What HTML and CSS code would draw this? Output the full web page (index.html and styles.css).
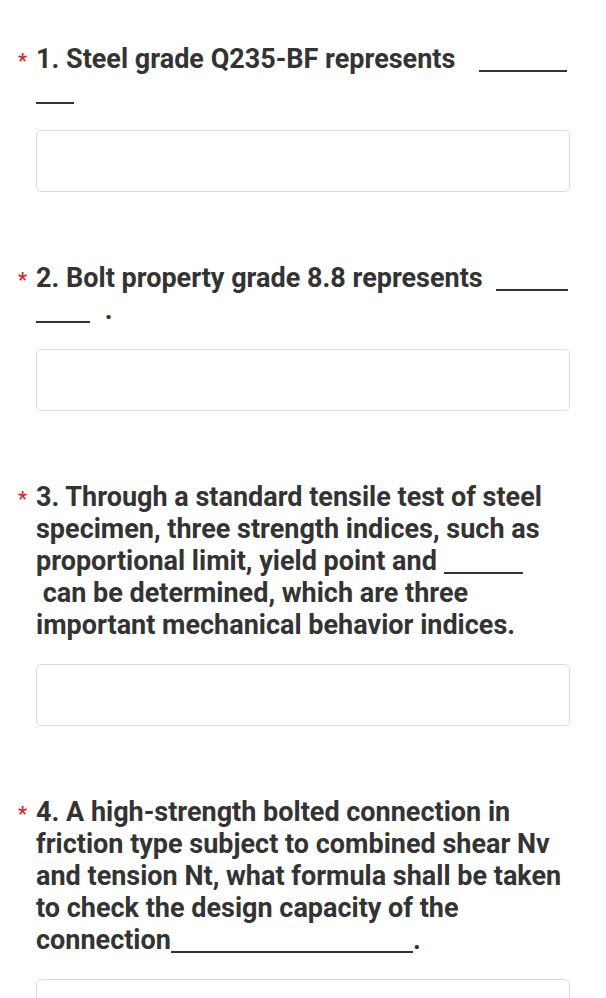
FILE: index.html
```html
<!DOCTYPE html>
<html lang="en">
<head>
<meta charset="utf-8">
<title>Quiz</title>
<link rel="stylesheet" href="styles.css">
</head>
<body>
<main class="form">
  <section class="question">
    <div class="title">
      <span class="req">*</span>
      <p class="text">1. Steel grade Q235-BF represents <span class="blank b1a"></span> <span class="blank b1b"></span></p>
    </div>
    <div class="answer"></div>
  </section>
  <section class="question">
    <div class="title">
      <span class="req">*</span>
      <p class="text">2. Bolt property grade 8.8 represents <span class="blank b2a"></span> <span class="blank b2b"></span> .</p>
    </div>
    <div class="answer"></div>
  </section>
  <section class="question">
    <div class="title">
      <span class="req">*</span>
      <p class="text">3. Through a standard tensile test of steel specimen, three strength indices, such as proportional limit, yield point and <span class="blank b3"></span> &nbsp;can be determined, which are three important mechanical behavior indices.</p>
    </div>
    <div class="answer"></div>
  </section>
  <section class="question">
    <div class="title">
      <span class="req">*</span>
      <p class="text">4. A high-strength bolted connection in friction type subject to combined shear Nv and tension Nt, what formula shall be taken to check the design capacity of the connection<span class="blank b4"></span>.</p>
    </div>
    <div class="answer"></div>
  </section>
</main>
</body>
</html>
```
FILE: styles.css
```css
html, body {
  margin: 0;
  padding: 0;
  background: #ffffff;
}
body {
  font-family: Roboto, "Liberation Sans", sans-serif;
  color: #333333;
}
.form {
  padding: 43px 36px 0 18px;
}
.question {
  margin-bottom: 70px;
}
.title {
  display: flex;
  align-items: flex-start;
}
.req {
  width: 18px;
  flex: none;
  color: #e0262b;
  font-size: 20px;
  font-weight: 700;
  line-height: 36px;
}
.text {
  margin: 0;
  flex: 1;
  font-size: 27px;
  font-weight: 700;
  line-height: 32px;
}
.blank {
  display: inline-block;
  height: 0;
  border-bottom: 2px solid #333333;
  vertical-align: -4px;
}
.b1a { width: 88px; margin-left: 17px; }
.b1b { width: 38px; }
.b2a { width: 72px; margin-left: 7px; }
.b2b { width: 54px; margin-right: 8px; }
.b3 { width: 79px; }
.b4 { width: 242px; }
.answer {
  margin: 23px 0 0 18px;
  height: 60px;
  border: 1px solid #dcdcdc;
  border-radius: 5px;
}
```
